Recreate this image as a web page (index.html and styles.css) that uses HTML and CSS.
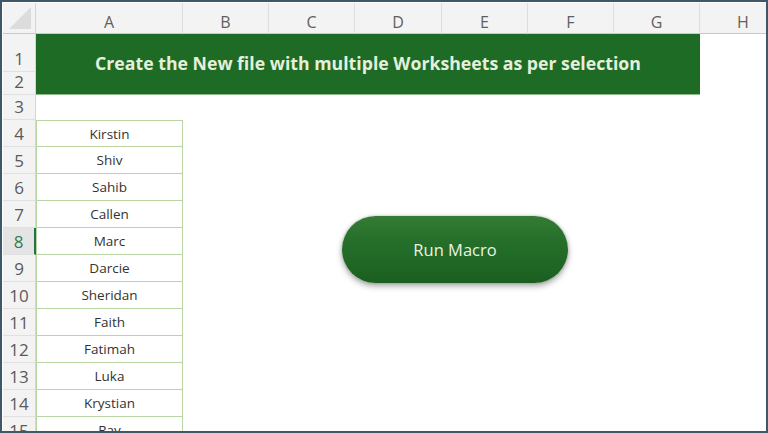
FILE: index.html
```html
<!DOCTYPE html>
<html>
<head>
<meta charset="utf-8">
<link rel="stylesheet" href="styles.css">
</head>
<body>
<div class="frame">
  <div class="sheet">
    <div class="corner"><span class="tri"></span></div>
    <div class="colhead">A</div>
    <div class="colhead">B</div>
    <div class="colhead">C</div>
    <div class="colhead">D</div>
    <div class="colhead">E</div>
    <div class="colhead">F</div>
    <div class="colhead">G</div>
    <div class="colhead last">H</div>

    <div class="rowhead r1">1</div>
    <div class="banner">Create the New file with multiple Worksheets as per selection</div>
    <div class="rowhead r2">2</div>
    <div class="rowhead r3">3</div>

    <div class="rowhead r4">4</div><div class="name first r4">Kirstin</div>
    <div class="rowhead r5">5</div><div class="name r5">Shiv</div>
    <div class="rowhead r6">6</div><div class="name r6">Sahib</div>
    <div class="rowhead r7">7</div><div class="name r7">Callen</div>
    <div class="rowhead r8 sel">8</div><div class="name r8">Marc</div>
    <div class="rowhead r9">9</div><div class="name r9">Darcie</div>
    <div class="rowhead r10">10</div><div class="name r10">Sheridan</div>
    <div class="rowhead r11">11</div><div class="name r11">Faith</div>
    <div class="rowhead r12">12</div><div class="name r12">Fatimah</div>
    <div class="rowhead r13">13</div><div class="name r13">Luka</div>
    <div class="rowhead r14">14</div><div class="name r14">Krystian</div>
    <div class="rowhead r15">15</div><div class="name r15">Ray</div>
  </div>
  <div class="macro-btn">Run Macro</div>
</div>
</body>
</html>
```
FILE: styles.css
```css
html, body {
  margin: 0;
  padding: 0;
  background: #ffffff;
}
.frame {
  position: relative;
  width: 768px;
  height: 433px;
  box-sizing: border-box;
  border: 2px solid #3f5868;
  overflow: hidden;
  background: #ffffff;
  font-family: "Open Sans", "Noto Sans", sans-serif;
}
.sheet {
  display: grid;
  margin: 1px 0 0 1px;
  grid-template-columns: 33px 147px 86px 86px 87px 86px 86px 86px 86px;
  grid-template-rows: 31px 38px 23px 25px repeat(12, 27px);
}
.corner {
  grid-column: 1;
  grid-row: 1;
  background: #f3f3f3;
  border-right: 1px solid #d6d6d6;
  border-bottom: 1px solid #c8c8c8;
  position: relative;
}
.tri {
  position: absolute;
  right: 4px;
  bottom: 4px;
  width: 0;
  height: 0;
  border-left: 22px solid transparent;
  border-bottom: 22px solid #dcdcdc;
}
.colhead {
  grid-row: 1;
  background: #f3f3f3;
  border-bottom: 1px solid #c8c8c8;
  border-right: 1px solid #dedede;
  color: #5f5f5f;
  font-size: 16px;
  display: flex;
  align-items: center;
  justify-content: center;
  padding-top: 7px;
  box-sizing: border-box;
}
.colhead.last { border-right: none; }
.rowhead {
  grid-column: 1;
  background: #f3f3f3;
  border-right: 1px solid #d6d6d6;
  border-bottom: 1px solid #e0e0e0;
  color: #5a5a5a;
  font-size: 17px;
  display: flex;
  align-items: flex-end;
  justify-content: center;
  padding-bottom: 1px;
  box-sizing: border-box;
}
.rowhead.sel {
  background: #e4e4e4;
  color: #2e7d4f;
  border-right: 2px solid #217346;
}
.r1 { grid-row: 2; }
.r2 { grid-row: 3; }
.r3 { grid-row: 4; }
.r4 { grid-row: 5; }
.r5 { grid-row: 6; }
.r6 { grid-row: 7; }
.r7 { grid-row: 8; }
.r8 { grid-row: 9; }
.r9 { grid-row: 10; }
.r10 { grid-row: 11; }
.r11 { grid-row: 12; }
.r12 { grid-row: 13; }
.r13 { grid-row: 14; }
.r14 { grid-row: 15; }
.r15 { grid-row: 16; }
.banner {
  grid-column: 2 / 9;
  grid-row: 2 / 4;
  background: #1e6b26;
  border-bottom: 1px solid #8fb98f;
  color: #e4f0dc;
  font-weight: 700;
  font-size: 17.7px;
  display: flex;
  align-items: center;
  justify-content: center;
  padding-bottom: 2px;
}
.name {
  grid-column: 2;
  border-left: 1px solid #b9d5a4;
  border-right: 1px solid #b9d5a4;
  border-bottom: 1px solid #b9d5a4;
  color: #333333;
  font-size: 13.5px;
  display: flex;
  align-items: center;
  justify-content: center;
  box-sizing: border-box;
}
.name.first { border-top: 1px solid #b9d5a4; }
.macro-btn {
  position: absolute;
  left: 340px;
  top: 214px;
  width: 226px;
  height: 67px;
  border-radius: 34px;
  background: linear-gradient(#347c35 0%, #26702b 35%, #1b5f20 100%);
  box-shadow: 0 3px 6px rgba(0,0,0,0.35), 0 0 3px rgba(0,0,0,0.2);
  color: #e8f4e2;
  font-size: 16.5px;
  display: flex;
  align-items: center;
  justify-content: center;
}
```
